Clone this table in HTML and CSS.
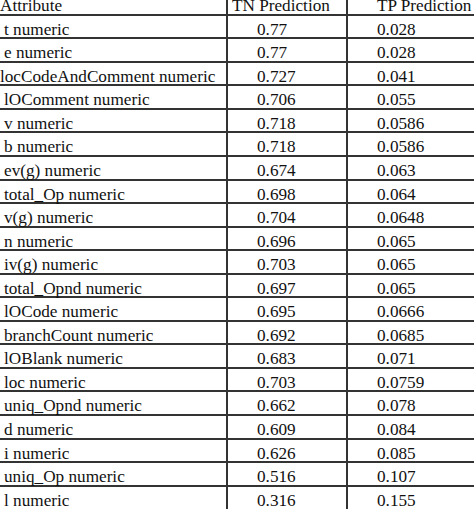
FILE: index.html
```html
<!DOCTYPE html>
<html>
<head>
<meta charset="utf-8">
<link rel="stylesheet" href="styles.css">
</head>
<body>
<div class="table">
  <div class="cell c1 head h1">Attribute</div>
  <div class="cell c2 head">TN Prediction</div>
  <div class="cell c3 head">TP Prediction</div>

  <div class="cell c1">t numeric</div><div class="cell c2">0.77</div><div class="cell c3">0.028</div>
  <div class="cell c1">e numeric</div><div class="cell c2">0.77</div><div class="cell c3">0.028</div>
  <div class="cell c1 flush">locCodeAndComment numeric</div><div class="cell c2">0.727</div><div class="cell c3">0.041</div>
  <div class="cell c1">lOComment numeric</div><div class="cell c2">0.706</div><div class="cell c3">0.055</div>
  <div class="cell c1">v numeric</div><div class="cell c2">0.718</div><div class="cell c3">0.0586</div>
  <div class="cell c1">b numeric</div><div class="cell c2">0.718</div><div class="cell c3">0.0586</div>
  <div class="cell c1">ev(g) numeric</div><div class="cell c2">0.674</div><div class="cell c3">0.063</div>
  <div class="cell c1">total_Op numeric</div><div class="cell c2">0.698</div><div class="cell c3">0.064</div>
  <div class="cell c1">v(g) numeric</div><div class="cell c2">0.704</div><div class="cell c3">0.0648</div>
  <div class="cell c1">n numeric</div><div class="cell c2">0.696</div><div class="cell c3">0.065</div>
  <div class="cell c1">iv(g) numeric</div><div class="cell c2">0.703</div><div class="cell c3">0.065</div>
  <div class="cell c1">total_Opnd numeric</div><div class="cell c2">0.697</div><div class="cell c3">0.065</div>
  <div class="cell c1">lOCode numeric</div><div class="cell c2">0.695</div><div class="cell c3">0.0666</div>
  <div class="cell c1">branchCount numeric</div><div class="cell c2">0.692</div><div class="cell c3">0.0685</div>
  <div class="cell c1">lOBlank numeric</div><div class="cell c2">0.683</div><div class="cell c3">0.071</div>
  <div class="cell c1">loc numeric</div><div class="cell c2">0.703</div><div class="cell c3">0.0759</div>
  <div class="cell c1">uniq_Opnd numeric</div><div class="cell c2">0.662</div><div class="cell c3">0.078</div>
  <div class="cell c1">d numeric</div><div class="cell c2">0.609</div><div class="cell c3">0.084</div>
  <div class="cell c1">i numeric</div><div class="cell c2">0.626</div><div class="cell c3">0.085</div>
  <div class="cell c1">uniq_Op numeric</div><div class="cell c2">0.516</div><div class="cell c3">0.107</div>
  <div class="cell c1 last">l numeric</div><div class="cell c2 last">0.316</div><div class="cell c3 last">0.155</div>
</div>
</body>
</html>
```

FILE: styles.css
```css
html, body {
  margin: 0;
  padding: 0;
  background: #ffffff;
}

body {
  width: 474px;
  height: 509px;
  overflow: hidden;
  font-family: "Liberation Serif", "Times New Roman", serif;
  font-size: 17.2px;
  color: #111111;
}

.table {
  display: grid;
  grid-template-columns: 228px 120px 1fr;
  grid-template-rows: 15.7px;
  grid-auto-rows: 23.55px;
  width: 474px;
}

.cell {
  box-sizing: border-box;
  border-bottom: 2px solid #333333;
  line-height: 27px;
  white-space: nowrap;
  overflow: visible;
}

.cell.last {
  border-bottom: none;
}

.c1 {
  border-right: 2px solid #333333;
  padding-left: 4px;
}

.c2 {
  border-right: 2px solid #333333;
  padding-left: 29px;
}

.c3 {
  padding-left: 29px;
}

.c1.flush {
  padding-left: 0;
}

.head {
  line-height: 11px;
}

.c1.h1 {
  padding-left: 0;
}

.c2.head {
  padding-left: 4px;
}
```
